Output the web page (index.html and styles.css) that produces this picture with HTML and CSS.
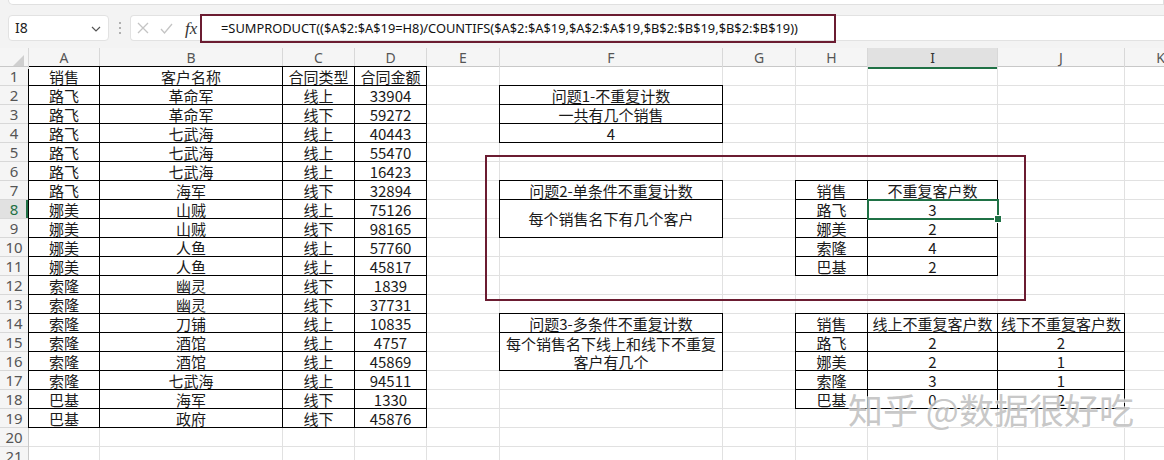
FILE: index.html
```html
<!DOCTYPE html>
<html lang="zh-CN">
<head>
<meta charset="utf-8">
<title>Sheet</title>
<link rel="stylesheet" href="styles.css">
</head>
<body>
<div class="app">
  <div class="ribbon-edge"></div>
  <div class="fbar">
    <div class="namebox">
      <span>I8</span>
      <svg class="chev" width="10" height="6" viewBox="0 0 10 6"><path d="M1 1 L5 5 L9 1" fill="none" stroke="#555" stroke-width="1.2"/></svg>
    </div>
    <div class="dots"><span></span><span></span><span></span></div>
    <div class="fx-group">
      <div class="fx-btns">
        <svg width="12" height="12" viewBox="0 0 12 12"><path d="M1 1 L11 11 M11 1 L1 11" stroke="#c4c4c4" stroke-width="1.3" fill="none"/></svg>
        <svg width="13" height="11" viewBox="0 0 13 11"><path d="M1 6 L4.5 10 L12 1" stroke="#c4c4c4" stroke-width="1.3" fill="none"/></svg>
        <span class="fx">fx</span>
      </div>
      <div class="finput">=SUMPRODUCT(($A$2:$A$19=H8)/COUNTIFS($A$2:$A$19,$A$2:$A$19,$B$2:$B$19,$B$2:$B$19))</div>
    </div>
    <div class="annot-formula"></div>
  </div>

  <div class="sheet">
    <div class="colhdr">
      <div class="corner"></div>
      <div>A</div><div>B</div><div>C</div><div>D</div><div>E</div><div>F</div><div>G</div><div>H</div><div class="on">I</div><div>J</div><div>K</div>
    </div>
    <div class="rowhdr">
      <div>1</div><div>2</div><div>3</div><div>4</div><div>5</div><div>6</div><div>7</div><div class="on">8</div><div>9</div><div>10</div><div>11</div><div>12</div><div>13</div><div>14</div><div>15</div><div>16</div><div>17</div><div>18</div><div>19</div><div>20</div><div>21</div>
    </div>
    <div class="lines">
      <div></div><div></div><div></div><div></div><div></div><div></div><div></div><div></div><div></div><div></div><div></div>
    </div>

    <div class="tbl t-main">
      <div>销售</div><div>客户名称</div><div>合同类型</div><div>合同金额</div>
      <div>路飞</div><div>革命军</div><div>线上</div><div>33904</div>
      <div>路飞</div><div>革命军</div><div>线下</div><div>59272</div>
      <div>路飞</div><div>七武海</div><div>线上</div><div>40443</div>
      <div>路飞</div><div>七武海</div><div>线上</div><div>55470</div>
      <div>路飞</div><div>七武海</div><div>线上</div><div>16423</div>
      <div>路飞</div><div>海军</div><div>线下</div><div>32894</div>
      <div>娜美</div><div>山贼</div><div>线上</div><div>75126</div>
      <div>娜美</div><div>山贼</div><div>线下</div><div>98165</div>
      <div>娜美</div><div>人鱼</div><div>线上</div><div>57760</div>
      <div>娜美</div><div>人鱼</div><div>线上</div><div>45817</div>
      <div>索隆</div><div>幽灵</div><div>线下</div><div>1839</div>
      <div>索隆</div><div>幽灵</div><div>线下</div><div>37731</div>
      <div>索隆</div><div>刀铺</div><div>线上</div><div>10835</div>
      <div>索隆</div><div>酒馆</div><div>线上</div><div>4757</div>
      <div>索隆</div><div>酒馆</div><div>线上</div><div>45869</div>
      <div>索隆</div><div>七武海</div><div>线上</div><div>94511</div>
      <div>巴基</div><div>海军</div><div>线下</div><div>1330</div>
      <div>巴基</div><div>政府</div><div>线下</div><div>45876</div>
    </div>

    <div class="tbl t-q1">
      <div>问题1-不重复计数</div>
      <div>一共有几个销售</div>
      <div>4</div>
    </div>

    <div class="tbl t-q2">
      <div>问题2-单条件不重复计数</div>
      <div class="mid">每个销售名下有几个客户</div>
    </div>

    <div class="tbl t-h1">
      <div>销售</div><div>不重复客户数</div>
      <div>路飞</div><div>3</div>
      <div>娜美</div><div>2</div>
      <div>索隆</div><div>4</div>
      <div>巴基</div><div>2</div>
    </div>
    <div class="sel"></div>

    <div class="tbl t-q3">
      <div>问题3-多条件不重复计数</div>
      <div class="wrap">每个销售名下线上和线下不重复客户有几个</div>
    </div>

    <div class="tbl t-h2">
      <div>销售</div><div>线上不重复客户数</div><div>线下不重复客户数</div>
      <div>路飞</div><div>2</div><div>2</div>
      <div>娜美</div><div>2</div><div>1</div>
      <div>索隆</div><div>3</div><div>1</div>
      <div>巴基</div><div>0</div><div>2</div>
    </div>

    <div class="annot-box"></div>
    <div class="watermark">知乎 @数据很好吃</div>
  </div>
</div>
</body>
</html>
```

FILE: styles.css
```css
* { box-sizing: border-box; margin: 0; padding: 0; }

:root {
  --cols: 71px 183px 72px 72px 73px 223px 73px 72px 130px 127px 72px;
  --grid: #e1e1e1;
  --hdr: #f5f5f5;
  --hdr-line: #d8d8d8;
  --green: #1f7145;
  --maroon: #6b1c31;
}

html, body { background: #f3f3f3; }
body { width: 1164px; height: 460px; overflow: hidden; }

.app { width: 1164px; height: 460px; overflow: hidden; background: #f3f3f3; }

.ribbon-edge {
  height: 5px;
  margin-left: 8px;
  background: #fff;
  border: 1px solid #e0e0e0;
  border-top: none;
  border-bottom-left-radius: 6px;
}

.fbar {
  position: relative;
  display: flex;
  align-items: center;
  height: 43px;
  padding: 10px 0 7px 8px;
}

.namebox {
  width: 101px;
  height: 26px;
  background: #fff;
  border: 1px solid #e2e2e2;
  border-radius: 4px;
  display: flex;
  align-items: center;
  justify-content: space-between;
  padding: 0 7px 0 6px;
  font: 14px/1 "Noto Sans", "Liberation Sans", sans-serif;
  color: #222;
}
.chev { margin-top: 1px; }

.dots {
  width: 21px;
  display: flex;
  flex-direction: column;
  align-items: center;
  gap: 3px;
}
.dots span { width: 2px; height: 2px; background: #9a9a9a; border-radius: 1px; }

.fx-group {
  flex: 1;
  height: 26px;
  background: #fff;
  border: 1px solid #e2e2e2;
  border-right: none;
  border-radius: 4px 0 0 4px;
  display: flex;
  align-items: center;
}
.fx-btns {
  width: 70px;
  display: flex;
  align-items: center;
  padding-left: 6px;
  gap: 11px;
}
.fx {
  font: italic 17px/1 "Liberation Serif", "DejaVu Serif", serif;
  color: #333;
  margin-left: 1px;
}
.finput {
  padding-left: 20px;
  font: 12.85px/1 "Noto Sans", "Liberation Sans", sans-serif;
  color: #111;
  white-space: nowrap;
}

.annot-formula {
  position: absolute;
  left: 200px;
  top: 9px;
  width: 636px;
  height: 29px;
  border: 2px solid var(--maroon);
}

/* ---------- sheet ---------- */
.sheet {
  position: relative;
  display: grid;
  grid-template-columns: 29px var(--cols);
  grid-template-rows: repeat(22, 19px);
  height: 412px;
  overflow: hidden;
  background: #fff;
  font-family: "Noto Sans CJK SC", "Noto Sans", sans-serif;
}

.colhdr {
  grid-column: 1 / -1;
  grid-row: 1;
  display: grid;
  grid-template-columns: 29px var(--cols);
  background: var(--hdr);
  border-bottom: 1px solid #c8c8c8;
}
.colhdr > div {
  border-right: 1px solid var(--hdr-line);
  text-align: center;
  font: 14px/19px "Noto Sans", "Liberation Sans", sans-serif;
  color: #555;
}
.colhdr > div.on {
  background: #e1e1e1;
  border-bottom: 2px solid var(--green);
  color: #333;
}
.colhdr .corner { position: relative; }
.colhdr .corner::after {
  content: "";
  position: absolute;
  right: 4px;
  bottom: 3px;
  width: 11px;
  height: 11px;
  background: #cfcfcf;
  clip-path: polygon(100% 0, 100% 100%, 0 100%);
}

.rowhdr {
  grid-column: 1;
  grid-row: 2 / -1;
  display: grid;
  grid-auto-rows: 19px;
  background: var(--hdr);
  border-right: 1px solid #c8c8c8;
}
.rowhdr > div {
  border-bottom: 1px solid var(--hdr-line);
  text-align: center;
  font: 15px/19px "Noto Sans", "Liberation Sans", sans-serif;
  color: #555;
}
.rowhdr > div.on {
  background: #e1e1e1;
  color: var(--green);
  box-shadow: inset -2px 0 0 var(--green);
}

.lines {
  grid-column: 2 / -1;
  grid-row: 2 / -1;
  display: grid;
  grid-template-columns: var(--cols);
  background: repeating-linear-gradient(to bottom, transparent 0 18px, var(--grid) 18px 19px);
}
.lines > div { border-right: 1px solid var(--grid); }

/* ---------- bordered tables ---------- */
.tbl {
  display: grid;
  grid-auto-rows: 19px;
  margin: -1px 0 0 -1px;
  border-top: 1px solid #000;
  border-left: 1px solid #000;
  background: #fff;
}
.tbl > div {
  border-right: 1px solid #000;
  border-bottom: 1px solid #000;
  text-align: center;
  font-size: 15px;
  line-height: 18px;
  padding-top: 1px;
  color: #1a1a1a;
  white-space: nowrap;
  overflow: hidden;
}

.t-main { grid-column: 2 / 6; grid-row: 2 / 21; grid-template-columns: 71px 183px 72px 72px; }
.t-q1 { grid-column: 7; grid-row: 3 / 6; }
.t-q2 { grid-column: 7; grid-row: 8 / 11; grid-template-rows: 19px 38px; }
.t-q3 { grid-column: 7; grid-row: 15 / 18; grid-template-rows: 19px 38px; }
.t-h1 { grid-column: 9 / 11; grid-row: 8 / 13; grid-template-columns: 72px 130px; }
.t-h2 { grid-column: 9 / 12; grid-row: 15 / 20; grid-template-columns: 72px 130px 127px; }

.tbl > div.mid {
  display: flex;
  align-items: center;
  justify-content: center;
  padding-top: 0;
}
.tbl > div.wrap {
  white-space: normal;
  padding: 2px 1px 0;
  line-height: 18px;
}

.sel {
  grid-column: 10;
  grid-row: 9;
  margin: -1px;
  border: 2px solid var(--green);
  position: relative;
}
.sel::after {
  content: "";
  position: absolute;
  right: -5px;
  bottom: -5px;
  width: 6px;
  height: 6px;
  background: var(--green);
  border: 1px solid #fff;
}

.annot-box {
  position: absolute;
  left: 485px;
  top: 107px;
  width: 541px;
  height: 146px;
  border: 2px solid var(--maroon);
}

.watermark {
  position: absolute;
  left: 848px;
  top: 338px;
  font: 35px/1.3 "Noto Sans CJK SC", sans-serif;
  color: rgba(185, 185, 185, 0.8);
  text-shadow: 1px 1px 0 rgba(255, 255, 255, 0.7), -1px -1px 0 rgba(255, 255, 255, 0.5);
  white-space: nowrap;
  pointer-events: none;
}
```
